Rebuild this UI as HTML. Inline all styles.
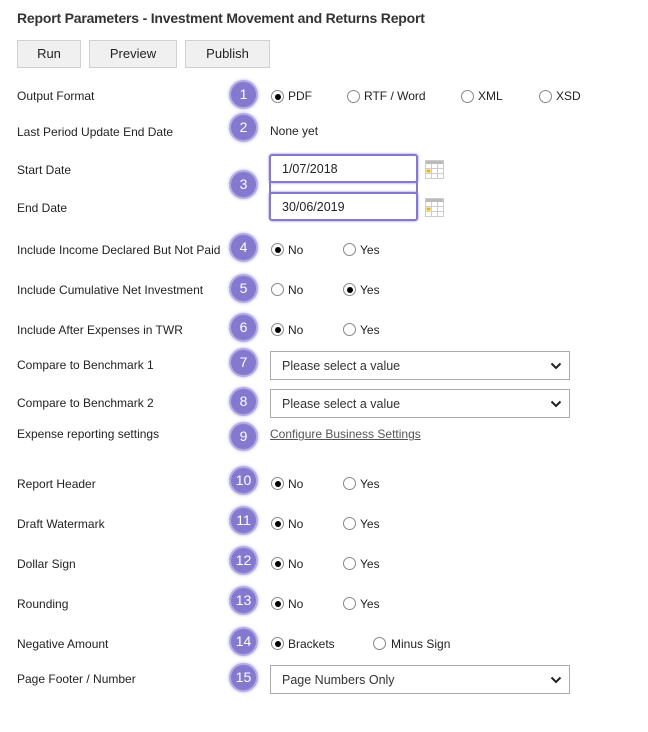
<!DOCTYPE html>
<html><head><meta charset="utf-8"><style>
*{box-sizing:border-box;margin:0;padding:0}
body{width:648px;height:732px;background:#fff;font-family:"Liberation Sans",sans-serif;font-size:12px;color:#222;position:relative;overflow:hidden}
.a{position:absolute;white-space:nowrap}
.t{left:17px;top:10px;font-size:14px;font-weight:bold;color:#333;letter-spacing:-0.2px}
.btn{position:absolute;top:40px;height:28px;background:#f0f0f0;border:1px solid #d0d0d0;font-size:13px;text-align:center;line-height:26px}
.l{left:17px}
.b{position:absolute;left:229px;width:29px;height:29px;border-radius:50%;background:#8478cf;border:2px solid #b3abe6;color:#fff;font-size:14px;text-align:center;line-height:25px;box-shadow:0 0 3px rgba(120,100,200,.5)}
.r{position:absolute;width:13px;height:13px;border-radius:50%;border:1px solid #888;background:#fff}
.r.on::after{content:"";position:absolute;left:2.5px;top:2.5px;width:6px;height:6px;border-radius:50%;background:#000}
.o{position:absolute;white-space:nowrap;margin-top:1px}
.in{position:absolute;left:269px;width:149px;height:29px;border:2px solid #8478cf;border-radius:3px;padding-left:11px;line-height:27px;font-size:12.5px;box-shadow:0 0 2px #8478cf}
.sel{position:absolute;left:270px;width:300px;height:29px;border:1px solid #aaa;padding-left:11px;line-height:28px;font-size:12.5px;color:#333}
.sel svg{position:absolute;right:7px;top:10px}
.cal{position:absolute;left:425px;width:19px;height:19px}
</style></head><body>
<div class="a t">Report Parameters - Investment Movement and Returns Report</div>
<div class="btn" style="left:17px;width:64px">Run</div>
<div class="btn" style="left:89px;width:88px">Preview</div>
<div class="btn" style="left:185px;width:85px">Publish</div>

<div class="a l" style="top:89px">Output Format</div>
<div class="a l" style="top:125px">Last Period Update End Date</div>
<div class="a l" style="top:163px">Start Date</div>
<div class="a l" style="top:201px">End Date</div>
<div class="a l" style="top:243px">Include Income Declared But Not Paid</div>
<div class="a l" style="top:283px">Include Cumulative Net Investment</div>
<div class="a l" style="top:323px">Include After Expenses in TWR</div>
<div class="a l" style="top:358px">Compare to Benchmark 1</div>
<div class="a l" style="top:396px">Compare to Benchmark 2</div>
<div class="a l" style="top:427px">Expense reporting settings</div>
<div class="a l" style="top:477px">Report Header</div>
<div class="a l" style="top:517px">Draft Watermark</div>
<div class="a l" style="top:557px">Dollar Sign</div>
<div class="a l" style="top:597px">Rounding</div>
<div class="a l" style="top:637px">Negative Amount</div>
<div class="a l" style="top:672px">Page Footer / Number</div>

<div class="b" style="top:80px">1</div>
<div class="b" style="top:113px">2</div>
<div class="b" style="top:170px">3</div>
<div class="b" style="top:233px">4</div>
<div class="b" style="top:274px">5</div>
<div class="b" style="top:313px">6</div>
<div class="b" style="top:348px">7</div>
<div class="b" style="top:387px">8</div>
<div class="b" style="top:422px">9</div>
<div class="b" style="top:466px">10</div>
<div class="b" style="top:506px">11</div>
<div class="b" style="top:546px">12</div>
<div class="b" style="top:586px">13</div>
<div class="b" style="top:627px">14</div>
<div class="b" style="top:663px">15</div>

<div class="r on" style="left:271px;top:90px"></div><div class="o" style="left:288px;top:88px">PDF</div>
<div class="r" style="left:347px;top:90px"></div><div class="o" style="left:364px;top:88px">RTF / Word</div>
<div class="r" style="left:461px;top:90px"></div><div class="o" style="left:478px;top:88px">XML</div>
<div class="r" style="left:539px;top:90px"></div><div class="o" style="left:556px;top:88px">XSD</div>
<div class="a" style="left:270px;top:124px">None yet</div>

<div class="in" style="top:154px">1/07/2018</div>
<div class="in" style="top:192px">30/06/2019</div>
<div style="position:absolute;left:269px;top:181px;width:149px;height:13px;border-left:2px solid #8478cf;border-right:2px solid #8478cf"></div>
<svg class="cal" style="top:160px" viewBox="0 0 19 19"><rect x=".5" y=".5" width="18" height="18" fill="#fff" stroke="#ccc"/><rect x="1" y="1" width="17" height="3" fill="#bbb"/><path d="M1 8.5h17M1 13.5h17M6.5 4v15M12.5 4v15" stroke="#ccc"/><rect x="1.5" y="9.5" width="4" height="3" fill="#e8b800"/></svg>
<svg class="cal" style="top:198px" viewBox="0 0 19 19"><rect x=".5" y=".5" width="18" height="18" fill="#fff" stroke="#ccc"/><rect x="1" y="1" width="17" height="3" fill="#bbb"/><path d="M1 8.5h17M1 13.5h17M6.5 4v15M12.5 4v15" stroke="#ccc"/><rect x="1.5" y="9.5" width="4" height="3" fill="#e8b800"/></svg>

<div class="r on" style="left:271px;top:243px"></div><div class="o" style="left:288px;top:242px">No</div>
<div class="r" style="left:343px;top:243px"></div><div class="o" style="left:360px;top:242px">Yes</div>
<div class="r" style="left:271px;top:283px"></div><div class="o" style="left:288px;top:282px">No</div>
<div class="r on" style="left:343px;top:283px"></div><div class="o" style="left:360px;top:282px">Yes</div>
<div class="r on" style="left:271px;top:323px"></div><div class="o" style="left:288px;top:322px">No</div>
<div class="r" style="left:343px;top:323px"></div><div class="o" style="left:360px;top:322px">Yes</div>

<div class="sel" style="top:351px">Please select a value<svg width="12" height="8" viewBox="0 0 12 8"><path d="M1.5 1.5l4.5 4.5 4.5-4.5" fill="none" stroke="#222" stroke-width="2"/></svg></div>
<div class="sel" style="top:389px">Please select a value<svg width="12" height="8" viewBox="0 0 12 8"><path d="M1.5 1.5l4.5 4.5 4.5-4.5" fill="none" stroke="#222" stroke-width="2"/></svg></div>
<div class="a" style="left:270px;top:427px;color:#555;text-decoration:underline">Configure Business Settings</div>

<div class="r on" style="left:271px;top:477px"></div><div class="o" style="left:288px;top:476px">No</div>
<div class="r" style="left:343px;top:477px"></div><div class="o" style="left:360px;top:476px">Yes</div>
<div class="r on" style="left:271px;top:517px"></div><div class="o" style="left:288px;top:516px">No</div>
<div class="r" style="left:343px;top:517px"></div><div class="o" style="left:360px;top:516px">Yes</div>
<div class="r on" style="left:271px;top:557px"></div><div class="o" style="left:288px;top:556px">No</div>
<div class="r" style="left:343px;top:557px"></div><div class="o" style="left:360px;top:556px">Yes</div>
<div class="r on" style="left:271px;top:597px"></div><div class="o" style="left:288px;top:596px">No</div>
<div class="r" style="left:343px;top:597px"></div><div class="o" style="left:360px;top:596px">Yes</div>
<div class="r on" style="left:271px;top:637px"></div><div class="o" style="left:288px;top:636px">Brackets</div>
<div class="r" style="left:373px;top:637px"></div><div class="o" style="left:391px;top:636px">Minus Sign</div>

<div class="sel" style="top:665px">Page Numbers Only<svg width="12" height="8" viewBox="0 0 12 8"><path d="M1.5 1.5l4.5 4.5 4.5-4.5" fill="none" stroke="#222" stroke-width="2"/></svg></div>
</body></html>
